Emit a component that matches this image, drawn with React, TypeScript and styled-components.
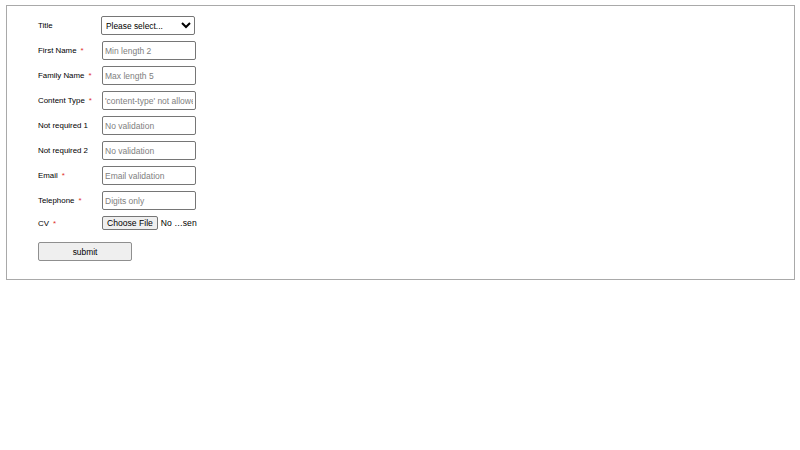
import React from 'react';
import styled, { createGlobalStyle } from 'styled-components';

const GlobalStyle = createGlobalStyle`
  html, body {
    margin: 0;
    padding: 0;
    background: #fff;
  }
  body {
    font-family: 'Liberation Sans', Arial, sans-serif;
  }
`;

const Page = styled.div`
  padding: 5px 5px 0 6px;
`;

const FormBox = styled.form`
  border: 1px solid #a9a9a9;
  height: 275px;
  box-sizing: border-box;
  padding: 10px 0 0 31px;
`;

const Rows = styled.div<{ $rowHeight?: number; $top?: number }>`
  display: grid;
  grid-template-columns: 64px 95px;
  grid-auto-rows: ${(p) => p.$rowHeight ?? 19}px;
  row-gap: 6px;
  align-items: center;
  margin-top: ${(p) => p.$top ?? 0}px;
`;

const Label = styled.label`
  font-size: 7.9px;
  color: #000;
`;

const Star = styled.span`
  color: #e0302a;
  margin-left: 4px;
`;

const Select = styled.select`
  width: 94px;
  height: 19px;
  margin-left: -1px;
  font-family: 'Liberation Sans', Arial, sans-serif;
  font-size: 8.4px;
  color: #000;
  border: 1px solid #767676;
  border-radius: 2px;
  background: #fff;
  padding: 0;
`;

const Input = styled.input`
  width: 94px;
  height: 19px;
  box-sizing: border-box;
  font-family: 'Liberation Sans', Arial, sans-serif;
  font-size: 8.5px;
  border: 1px solid #767676;
  border-radius: 2px;
  padding: 0 2px;
  &::placeholder {
    color: #808080;
  }
`;

const FileField = styled.div`
  display: flex;
  align-items: center;
  gap: 3px;
  font-size: 8.6px;
  white-space: nowrap;
`;

const FileButton = styled.button`
  height: 14px;
  box-sizing: border-box;
  padding: 0 4px;
  font-family: 'Liberation Sans', Arial, sans-serif;
  font-size: 8.6px;
  background: #efefef;
  border: 1px solid #767676;
  border-radius: 2px;
  color: #000;
`;

const Submit = styled.button`
  margin-top: 12px;
  width: 94px;
  height: 19px;
  font-family: 'Liberation Sans', Arial, sans-serif;
  font-size: 8.4px;
  background: #efefef;
  border: 1px solid #8f8f8f;
  border-radius: 2px;
  color: #000;
`;

const fields = [
  { label: 'First Name', required: true, placeholder: 'Min length 2' },
  { label: 'Family Name', required: true, placeholder: 'Max length 5' },
  { label: 'Content Type', required: true, placeholder: "'content-type' not allowed" },
  { label: 'Not required 1', required: false, placeholder: 'No validation' },
  { label: 'Not required 2', required: false, placeholder: 'No validation' },
  { label: 'Email', required: true, placeholder: 'Email validation' },
  { label: 'Telephone', required: true, placeholder: 'Digits only' },
];

export default function App() {
  return (
    <Page>
      <GlobalStyle />
      <FormBox onSubmit={(e) => e.preventDefault()}>
        <Rows>
          <Label>Title</Label>
          <Select defaultValue="">
            <option value="">Please select...</option>
            <option>Mr</option>
            <option>Mrs</option>
            <option>Ms</option>
          </Select>
          {fields.map((f) => (
            <React.Fragment key={f.label}>
              <Label>
                {f.label}
                {f.required && <Star>*</Star>}
              </Label>
              <Input placeholder={f.placeholder} />
            </React.Fragment>
          ))}
        </Rows>
        <Rows $rowHeight={14} $top={6}>
          <Label>
            CV<Star>*</Star>
          </Label>
          <FileField>
            <FileButton type="button">Choose File</FileButton>
            <span>No …sen</span>
          </FileField>
        </Rows>
        <Submit type="submit">submit</Submit>
      </FormBox>
    </Page>
  );
}
